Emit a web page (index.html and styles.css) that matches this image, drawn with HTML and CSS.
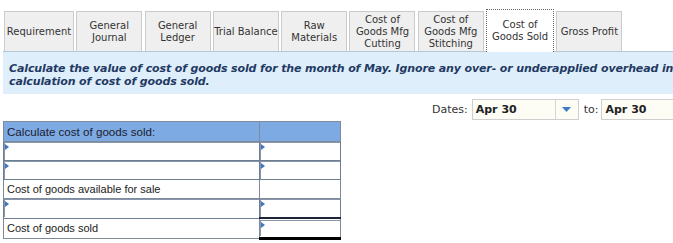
FILE: index.html
```html
<!DOCTYPE html>
<html>
<head>
<meta charset="utf-8">
<link rel="stylesheet" href="styles.css">
</head>
<body>
<div class="page">
  <div class="tabs">
    <div class="tab tab-wide">Requirement</div>
    <div class="tab">General<br>Journal</div>
    <div class="tab">General<br>Ledger</div>
    <div class="tab">Trial Balance</div>
    <div class="tab">Raw<br>Materials</div>
    <div class="tab">Cost of<br>Goods Mfg<br>Cutting</div>
    <div class="tab">Cost of<br>Goods Mfg<br>Stitching</div>
    <div class="tab active">Cost of<br>Goods Sold</div>
    <div class="tab">Gross Profit</div>
  </div>
  <div class="panel">
    <p class="instr">Calculate the value of cost of goods sold for the month of May. Ignore any over- or underapplied overhead in<br>calculation of cost of goods sold.</p>
  </div>
  <div class="dates">
    <span class="dlabel">Dates:</span>
    <div class="select"><span class="sval">Apr 30</span><span class="sarrow"><svg width="9" height="5" viewBox="0 0 9 5"><path d="M0 0H9L4.5 5Z" fill="#3d7cc4"/></svg></span></div>
    <span class="dlabel to">to:</span>
    <div class="select select2"><span class="sval">Apr 30</span></div>
  </div>
  <table class="grid">
    <tr class="head"><td class="c1">Calculate cost of goods sold:</td><td class="c2"></td></tr>
    <tr class="input"><td class="c1"><div class="inp"></div></td><td class="c2"><div class="inp"></div></td></tr>
    <tr class="input"><td class="c1"><div class="inp"></div></td><td class="c2"><div class="inp"></div></td></tr>
    <tr class="label"><td class="c1">Cost of goods available for sale</td><td class="c2 sub"></td></tr>
    <tr class="input"><td class="c1"><div class="inp"></div></td><td class="c2"><div class="inp"></div></td></tr>
    <tr class="label"><td class="c1">Cost of goods sold</td><td class="c2 total"><div class="inp"></div></td></tr>
  </table>
</div>
</body>
</html>
```
FILE: styles.css
```css
html, body { margin: 0; padding: 0; background: #fff; overflow: hidden; }
.page { width: 720px; padding-left: 3px; }

.tabs {
  display: flex;
  align-items: flex-end;
  gap: 2.3px;
  padding: 11px 0 0 1px;
  height: 40px;
}
.tab {
  box-sizing: border-box;
  width: 66px;
  height: 40px;
  border: 1px solid #cbcbcb;
  border-bottom: none;
  background: #efefef;
  color: #333;
  font: 10px/12px "DejaVu Sans", Verdana, sans-serif;
  display: flex;
  align-items: center;
  justify-content: center;
  text-align: center;
}
.tab-wide { width: 70px; }
.active {
  background: #fff;
  border: 1px dotted #666;
  border-bottom: none;
  height: 43px;
  width: 68px;
  margin-bottom: -1px;
  position: relative;
  z-index: 1;
}

.panel {
  background: #dfeefb;
  border-top: 1px solid #b8c7d6;
  height: 43px;
  box-sizing: border-box;
  padding: 10px 0 0 6px;
}
.instr {
  margin: 0;
  font: italic bold 11px/13px "DejaVu Sans", Verdana, sans-serif;
  letter-spacing: -0.12px;
  color: #1f3a63;
  white-space: nowrap;
}

.dates {
  display: flex;
  align-items: center;
  height: 24px;
  margin-top: 3px;
  padding-left: 429px;
  font: 11px "DejaVu Sans", Verdana, sans-serif;
  color: #333;
}
.dlabel { margin-right: 4px; }
.to { margin-left: 5px; margin-right: 3px; }
.select {
  box-sizing: border-box;
  display: flex;
  width: 107px;
  height: 21px;
  border: 1px solid #cfcfcf;
  background: #fdfcf5;
}
.sval {
  flex: 1;
  padding-left: 3px;
  font-weight: bold;
  color: #222;
  line-height: 19px;
}
.sarrow {
  width: 22px;
  border-left: 1px solid #d6d6d6;
  display: flex;
  align-items: center;
  justify-content: center;
}
.select2 { width: 90px; }

.grid {
  border-collapse: collapse;
  font: 11px "Liberation Sans", Arial, sans-serif;
  color: #222;
}
.grid td {
  border: 1px solid #7f8b9b;
  padding: 0;
  height: 18px;
}
.c1 { width: 252px; }
.c2 { width: 80px; }
.head td { background: #7eaae3; height: 19px; }
.head .c1 { padding-left: 3px; font-size: 11.6px; color: #1b2030; }
.label .c1 { padding-left: 3px; }
.input td { border-color: #6f7d90; }
.inp {
  position: relative;
  box-sizing: border-box;
  height: 18px;
  border-top: 1px solid #8796aa;
  border-left: 1px solid #8796aa;
  background: #fff;
}
.inp::before {
  content: "";
  position: absolute;
  left: 0;
  top: 1px;
  border-left: 4px solid #4177bb;
  border-top: 3px solid transparent;
  border-bottom: 3px solid transparent;
}
.grid td.sub { border-top: 1px solid #111; }
.grid td.total { border-top: 2px solid #1d2438; border-bottom: 3px solid #000; }
.total .inp { height: 16px; }
```
